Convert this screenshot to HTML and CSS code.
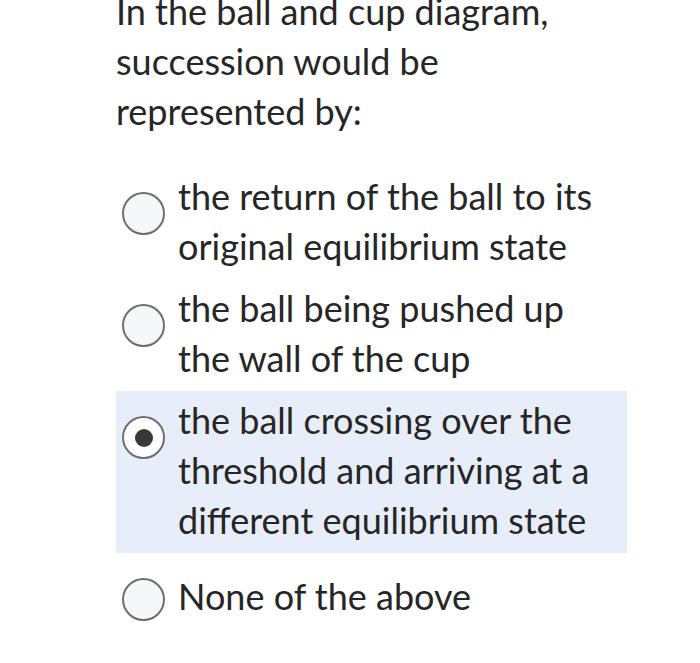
FILE: index.html
```html
<!DOCTYPE html>
<html>
<head>
<meta charset="utf-8">
<link rel="stylesheet" href="styles.css">
</head>
<body>
<div class="quiz">
  <p class="question">In the ball and cup diagram, succession would be represented by:</p>
  <div class="options">
    <div class="option">
      <span class="radio"></span>
      <span class="label">the return of the ball to its original equilibrium state</span>
    </div>
    <div class="option">
      <span class="radio"></span>
      <span class="label">the ball being pushed up the wall of the cup</span>
    </div>
    <div class="option selected">
      <span class="radio"><span class="dot"></span></span>
      <span class="label">the ball crossing over the threshold and arriving at a different equilibrium state</span>
    </div>
    <div class="option single">
      <span class="radio"></span>
      <span class="label">None of the above</span>
    </div>
  </div>
</div>
</body>
</html>
```

FILE: styles.css
```css
html, body {
  margin: 0;
  padding: 0;
  background: #ffffff;
}
body {
  font-family: Lato, "Open Sans", sans-serif;
  color: #262626;
  font-size: 36px;
  line-height: 50px;
}
.quiz {
  margin-left: 116px;
  width: 511px;
}
.question {
  margin: -14px 0 0 0;
  width: 460px;
}
.options {
  margin-top: 31px;
  display: flex;
  flex-direction: column;
}
.option {
  display: flex;
  align-items: flex-start;
  padding: 4px 6px 8px 6px;
  gap: 13px;
}
.option.selected {
  background: #e7eef9;
}
.option.single {
  margin-top: 14px;
}
.radio {
  flex: none;
  box-sizing: border-box;
  width: 43px;
  height: 43px;
  margin-top: 21px;
  border-radius: 50%;
  border: 2px solid #6e6e6e;
  background: #f6f7fb;
  display: flex;
  align-items: center;
  justify-content: center;
}
.option.single .radio {
  margin-top: 7px;
}
.option.selected .radio {
  background: #ffffff;
}
.dot {
  width: 18px;
  height: 18px;
  border-radius: 50%;
  background: #383838;
}
.label {
  display: block;
}
```
